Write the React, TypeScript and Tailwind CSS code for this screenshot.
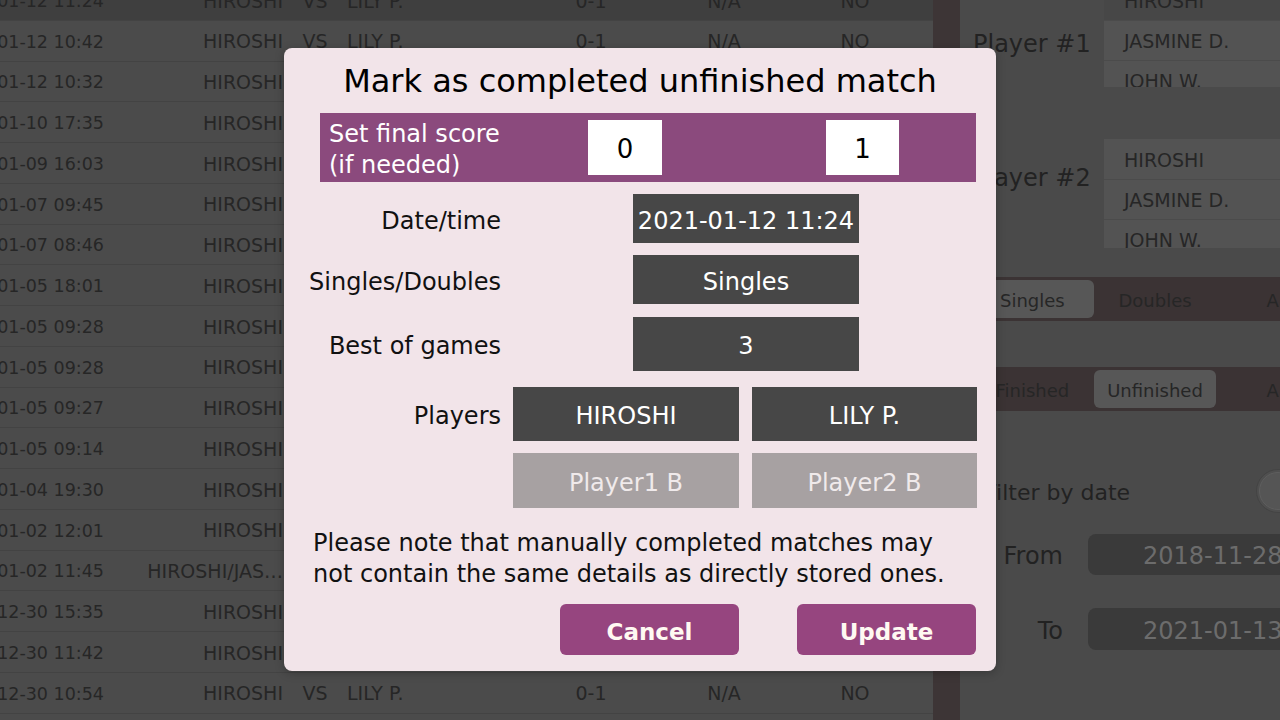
import React from "react";

interface MatchRow {
  date: string;
  p1: string;
  p2: string;
  score: string;
  selected?: boolean;
}

const rows: MatchRow[] = [
  { date: "2021-01-12 11:24", p1: "HIROSHI", p2: "LILY P.", score: "0-1", selected: true },
  { date: "2021-01-12 10:42", p1: "HIROSHI", p2: "LILY P.", score: "0-1" },
  { date: "2021-01-12 10:32", p1: "HIROSHI", p2: "LILY P.", score: "0-1" },
  { date: "2021-01-10 17:35", p1: "HIROSHI", p2: "LILY P.", score: "0-1" },
  { date: "2021-01-09 16:03", p1: "HIROSHI", p2: "LILY P.", score: "0-1" },
  { date: "2021-01-07 09:45", p1: "HIROSHI", p2: "LILY P.", score: "0-1" },
  { date: "2021-01-07 08:46", p1: "HIROSHI", p2: "LILY P.", score: "0-1" },
  { date: "2021-01-05 18:01", p1: "HIROSHI", p2: "LILY P.", score: "0-1" },
  { date: "2021-01-05 09:28", p1: "HIROSHI", p2: "LILY P.", score: "0-1" },
  { date: "2021-01-05 09:28", p1: "HIROSHI", p2: "LILY P.", score: "0-1" },
  { date: "2021-01-05 09:27", p1: "HIROSHI", p2: "LILY P.", score: "0-1" },
  { date: "2021-01-05 09:14", p1: "HIROSHI", p2: "LILY P.", score: "0-1" },
  { date: "2021-01-04 19:30", p1: "HIROSHI", p2: "LILY P.", score: "0-1" },
  { date: "2021-01-02 12:01", p1: "HIROSHI", p2: "LILY P.", score: "0-1" },
  { date: "2021-01-02 11:45", p1: "HIROSHI/JAS…", p2: "LILY P./JO…", score: "0-1" },
  { date: "2020-12-30 15:35", p1: "HIROSHI", p2: "LILY P.", score: "0-1" },
  { date: "2020-12-30 11:42", p1: "HIROSHI", p2: "LILY P.", score: "0-1" },
  { date: "2020-12-30 10:54", p1: "HIROSHI", p2: "LILY P.", score: "0-1" },
  { date: "2020-12-29 18:20", p1: "HIROSHI", p2: "LILY P.", score: "0-1" },
];

const MatchTable = () => (
  <div className="w-[933px] shrink-0 bg-[#4b4b4b]">
    <div className="-mt-[20px]">
      {rows.map((r, i) => (
        <div
          key={i}
          className={`grid h-[40.75px] grid-cols-[104px_179px_64px_180px_128px_138px_124px] items-center border-b border-[#434343] pt-[2px] text-[19px] text-[#262626] ${
            r.selected ? "bg-[#3f3f3f]" : "bg-[#4b4b4b]"
          }`}
        >
          <div className="flex justify-end whitespace-nowrap text-[17.5px]">
            <span>{r.date}</span>
          </div>
          <div className="flex justify-end whitespace-nowrap">{r.p1}</div>
          <div className="text-center">VS</div>
          <div className="whitespace-nowrap">{r.p2}</div>
          <div className="text-center">{r.score}</div>
          <div className="text-center">N/A</div>
          <div className="text-center">NO</div>
        </div>
      ))}
    </div>
  </div>
);

const PlayerList = ({ names, selectedFirst }: { names: string[]; selectedFirst?: boolean }) => (
  <div className="h-full min-w-0 flex-1 overflow-hidden bg-[#535353]">
    {names.map((n, i) => (
      <div
        key={i}
        className={`flex h-[40px] items-center pl-[20px] pt-[2px] text-[19px] text-[#262626] ${
          selectedFirst && i === 0 ? "bg-[#474747]" : ""
        } ${i > 0 ? "border-t border-[#4b4b4b]" : ""}`}
      >
        {n}
      </div>
    ))}
  </div>
);

const Segments = ({ items, active }: { items: string[]; active: number }) => (
  <div className="ml-[8px] flex h-[44px] w-[374px] rounded-[8px] bg-[#3b3334] p-[3px]">
    {items.map((s, i) => (
      <div
        key={s}
        className={`flex flex-1 items-center justify-center rounded-[6px] pt-[2px] text-[18px] text-[#262626] ${
          i === active ? "bg-[#575757]" : ""
        }`}
      >
        {s}
      </div>
    ))}
  </div>
);

const FilterPanel = () => (
  <div className="min-w-0 flex-1 overflow-hidden bg-[#4a4a4a] text-[#222]">
    <div className="-mt-[20px] flex h-[107px]">
      <div className="w-[144px] shrink-0 whitespace-nowrap pl-[13px] pt-[49px] text-[24px] leading-[30px]">Player #1</div>
      <PlayerList names={["HIROSHI", "JASMINE D.", "JOHN W."]} selectedFirst />
    </div>
    <div className="mt-[52px] flex h-[109px]">
      <div className="w-[144px] shrink-0 whitespace-nowrap pl-[13px] pt-[24px] text-[24px] leading-[30px]">Player #2</div>
      <PlayerList names={["HIROSHI", "JASMINE D.", "JOHN W."]} />
    </div>
    <div className="mt-[29px]">
      <Segments items={["Singles", "Doubles", "All"]} active={0} />
    </div>
    <div className="mt-[46px]">
      <Segments items={["Finished", "Unfinished", "All"]} active={1} />
    </div>
    <div className="mt-[58px] flex h-[44px] items-center">
      <div className="whitespace-nowrap pl-[25px] pt-[3px] text-[22px]">Filter by date</div>
      <div className="-mr-[56px] ml-auto flex h-[44px] w-[80px] shrink-0 items-center rounded-full border border-[#444] bg-[#4f4f4f] px-[2px]">
        <div className="h-[38px] w-[38px] rounded-full border border-[#5e5e5e] bg-[#555]" />
      </div>
    </div>
    <div className="mt-[21px] flex h-[41px] items-center">
      <div className="w-[103px] shrink-0 pt-[3px] text-right text-[24px]">From</div>
      <div className="ml-[25px] flex h-full min-w-0 flex-1 items-center overflow-hidden whitespace-nowrap rounded-l-[8px] bg-[#3a3a3a] pl-[55px] pt-[3px] text-[24px] text-[#6c6c6c]">
        2018-11-28 00:00
      </div>
    </div>
    <div className="mt-[33px] flex h-[42px] items-center">
      <div className="w-[103px] shrink-0 pt-[3px] text-right text-[24px]">To</div>
      <div className="ml-[25px] flex h-full min-w-0 flex-1 items-center overflow-hidden whitespace-nowrap rounded-l-[8px] bg-[#3a3a3a] pl-[55px] pt-[3px] text-[24px] text-[#6c6c6c]">
        2021-01-13 23:59
      </div>
    </div>
  </div>
);

const FieldRow = ({ label, value, tall }: { label: string; value: string; tall?: boolean }) => (
  <div className={`flex items-center ${tall ? "h-[54px]" : "h-[49px]"}`}>
    <div className="w-[217px] pt-[4px] text-right text-[24px] text-[#111]">{label}</div>
    <div className="ml-[132px] flex h-full w-[226px] items-center justify-center bg-[#474747] pt-[4px] text-[24px] text-white">
      {value}
    </div>
  </div>
);

const CompleteMatchModal = () => (
  <div className="absolute left-[284px] top-[48px] flex h-[623px] w-[712px] flex-col rounded-[8px] bg-[#f2e4e9] shadow-[0_2px_10px_rgba(0,0,0,0.25)]">
    <h2 className="pt-[15px] text-center text-[32px] leading-[37px] text-black">
      Mark as completed unfinished match
    </h2>

    {/* Score bar */}
    <div className="ml-[36px] mr-[20px] mt-[13px] flex h-[69px] items-center bg-[#8b4a7d]">
      <div className="w-[268px] pl-[9px] pt-[4px] text-[24px] leading-[31px] text-white">
        Set final score
        <br />
        (if needed)
      </div>
      <div className="flex h-[55px] w-[74px] items-center justify-center bg-white pt-[4px] text-[26px] text-black">0</div>
      <div className="ml-[164px] flex h-[55px] w-[73px] items-center justify-center bg-white pt-[4px] text-[26px] text-black">
        1
      </div>
    </div>

    <div className="mt-[12px]">
      <FieldRow label="Date/time" value="2021-01-12 11:24" />
    </div>
    <div className="mt-[12px]">
      <FieldRow label="Singles/Doubles" value="Singles" />
    </div>
    <div className="mt-[13px]">
      <FieldRow label="Best of games" value="3" tall />
    </div>

    {/* Players */}
    <div className="mt-[16px] flex h-[54px] items-center">
      <div className="w-[217px] pt-[4px] text-right text-[24px] text-[#111]">Players</div>
      <div className="ml-[12px] flex h-full w-[226px] items-center justify-center bg-[#474747] pt-[4px] text-[24px] text-white">
        HIROSHI
      </div>
      <div className="ml-[13px] flex h-full w-[225px] items-center justify-center bg-[#474747] pt-[4px] text-[24px] text-white">
        LILY P.
      </div>
    </div>
    <div className="mt-[12px] flex h-[55px] items-center">
      <div className="ml-[229px] flex h-full w-[226px] items-center justify-center bg-[#a7a1a2] pt-[4px] text-[24px] text-[#f0eaeb]">
        Player1 B
      </div>
      <div className="ml-[13px] flex h-full w-[225px] items-center justify-center bg-[#a7a1a2] pt-[4px] text-[24px] text-[#f0eaeb]">
        Player2 B
      </div>
    </div>

    <p className="ml-[29px] mt-[20px] whitespace-nowrap text-[24px] leading-[31px] text-[#111]">
      Please note that manually completed matches may
      <br />
      not contain the same details as directly stored ones.
    </p>

    <div className="mr-[20px] mt-[14px] flex justify-end gap-[58px]">
      <button className="h-[51px] w-[179px] rounded-[6px] bg-[#96457f] pt-[5px] text-[23px] font-bold text-[#fff9f2]">Cancel</button>
      <button className="h-[51px] w-[179px] rounded-[6px] bg-[#96457f] pt-[5px] text-[23px] font-bold text-[#fff9f2]">Update</button>
    </div>
  </div>
);

export default function App() {
  return (
    <div className="relative h-[720px] w-[1280px] overflow-hidden bg-[#4a4a4a] font-['DejaVu_Sans',sans-serif]">
      <div className="flex h-full">
        <MatchTable />
        <div className="w-[27px] shrink-0 bg-[#3d3536]" />
        <FilterPanel />
      </div>
      <CompleteMatchModal />
    </div>
  );
}
